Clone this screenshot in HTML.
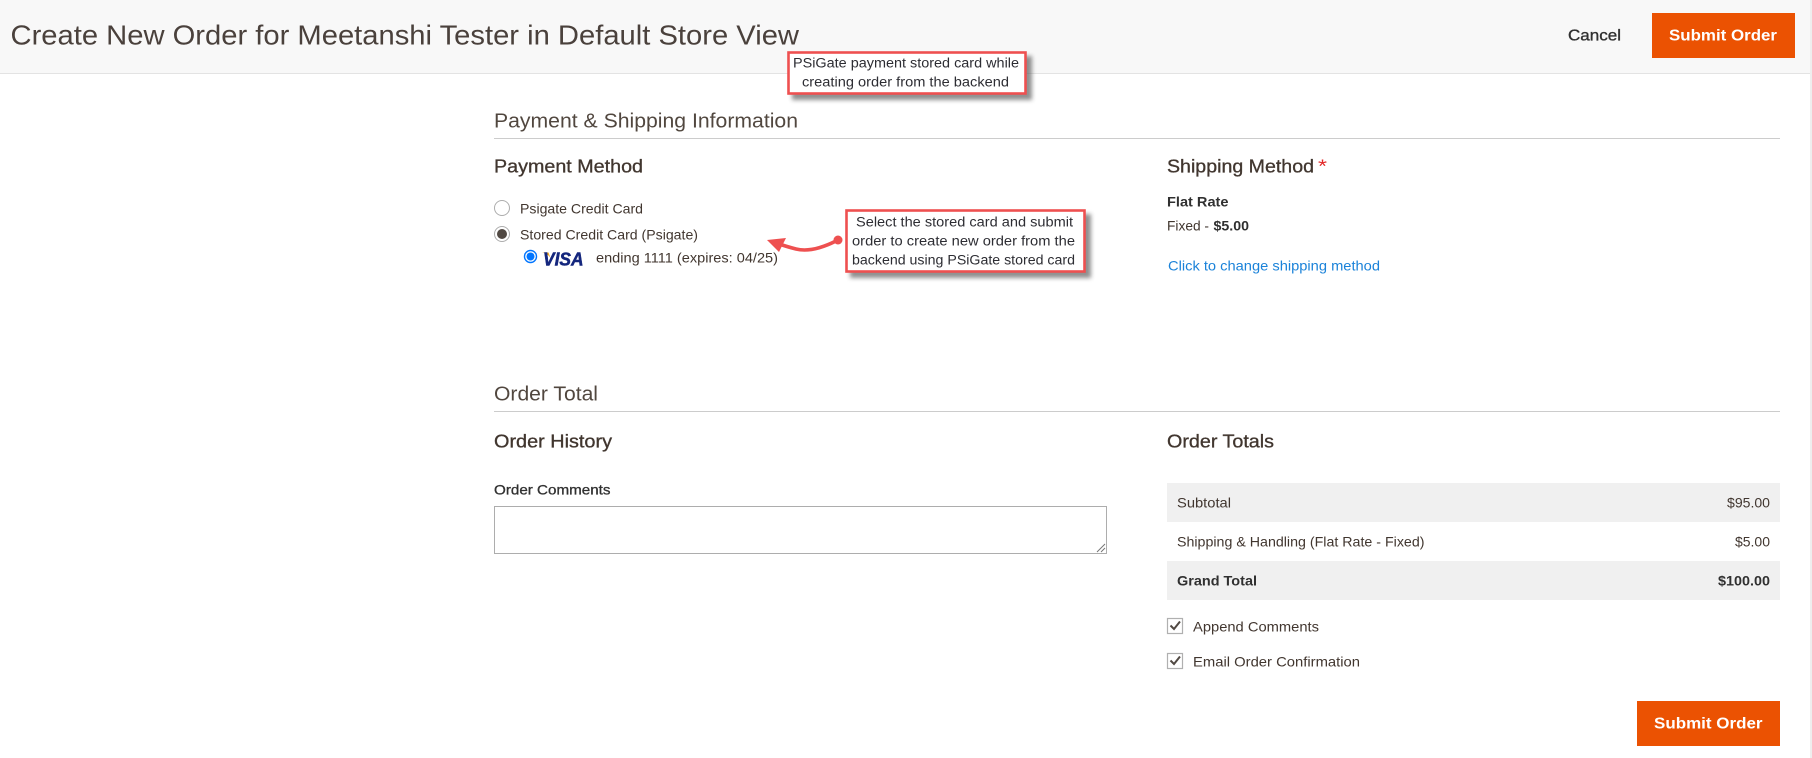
<!DOCTYPE html>
<html lang="en">
<head>
<meta charset="utf-8">
<title>Create New Order</title>
<style>
html,body{margin:0;padding:0;background:#fff;width:1812px;height:758px;overflow:hidden}
svg{display:block;position:absolute;left:0;top:0}
text{font-family:"Liberation Sans",sans-serif;fill:#41362f;white-space:pre}
.t14{font-size:14px}
.t14b{font-size:14px;font-weight:700;fill:#303030}
.h20{font-size:20px;fill:#51473f}
.h18{font-size:18px;stroke:#41362f;stroke-width:.3px}
.lbl{font-size:14px;stroke:#303030;stroke-width:.3px;fill:#303030}
.btn{font-size:16px;fill:#fff;font-weight:700}
.call{font-size:13.5px;fill:#2d2d33}
</style>
</head>
<body>
<svg width="1812" height="758" viewBox="0 0 1812 758" xmlns="http://www.w3.org/2000/svg">
<defs>
<filter id="sh" x="-10%" y="-20%" width="125%" height="150%"><feGaussianBlur stdDeviation="2"/></filter>
</defs>
<rect width="1812" height="758" fill="#fff"/>
<rect width="1812" height="73" fill="#f8f8f8"/>
<rect y="73" width="1812" height="1" fill="#e3e3e3"/>
<rect x="1810" width="2" height="758" fill="#eeeeee"/>

<text x="10.5" y="44.5" font-size="28" textLength="788.5" lengthAdjust="spacingAndGlyphs" style="fill:#4a413c">Create New Order for Meetanshi Tester in Default Store View</text>
<text x="1568" y="40.5" font-size="16" textLength="53" lengthAdjust="spacingAndGlyphs" style="stroke:#303030;stroke-width:.35px;fill:#303030">Cancel</text>
<rect x="1652" y="13" width="143" height="45" fill="#eb5202"/>
<text class="btn" x="1669" y="40.5" textLength="108" lengthAdjust="spacingAndGlyphs">Submit Order</text>

<!-- section 1 -->
<text class="h20" x="494" y="127.5" textLength="304" lengthAdjust="spacingAndGlyphs">Payment &amp; Shipping Information</text>
<rect x="494" y="138" width="1286" height="1" fill="#cccccc"/>
<text class="h18" x="494" y="172.5" textLength="149" lengthAdjust="spacingAndGlyphs">Payment Method</text>
<text class="h18" x="1167" y="172.5" textLength="147" lengthAdjust="spacingAndGlyphs">Shipping Method</text>
<text x="1318" y="172.5" font-size="18" textLength="9" lengthAdjust="spacingAndGlyphs" style="fill:#e22626">*</text>

<circle cx="502" cy="208" r="7.5" fill="#fff" stroke="#adadad" stroke-width="1"/>
<text class="t14" x="520" y="213.5" textLength="123" lengthAdjust="spacingAndGlyphs">Psigate Credit Card</text>
<circle cx="502" cy="234" r="7.5" fill="#fff" stroke="#adadad" stroke-width="1"/>
<circle cx="502" cy="234" r="5" fill="#514943"/>
<text class="t14" x="520" y="239.5" textLength="178" lengthAdjust="spacingAndGlyphs">Stored Credit Card (Psigate)</text>

<circle cx="530.5" cy="256.5" r="6" fill="#fff" stroke="#0075ff" stroke-width="1.4"/>
<circle cx="530.5" cy="256.5" r="4" fill="#0075ff"/>
<path d="M542 252.5h6.5l2 5.5c-1.5-2.700-4.500-4.700-8.500-5.500z" fill="#f2a81d"/>
<text x="543" y="265.500" font-size="18" font-weight="700" font-style="italic" textLength="40.500" lengthAdjust="spacingAndGlyphs" style="fill:#14267d;stroke:#14267d;stroke-width:.5px">VISA</text>
<text class="t14" x="596" y="262.5" textLength="182" lengthAdjust="spacingAndGlyphs">ending 1111 (expires: 04/25)</text>

<text class="t14b" x="1167" y="206.5" textLength="61.500" lengthAdjust="spacingAndGlyphs">Flat Rate</text>
<text class="t14" x="1167" y="230.5" textLength="42" lengthAdjust="spacingAndGlyphs">Fixed -</text>
<text class="t14b" x="1213.500" y="230.5" textLength="35.500" lengthAdjust="spacingAndGlyphs">$5.00</text>
<text class="t14" x="1168" y="270.5" textLength="212" lengthAdjust="spacingAndGlyphs" style="fill:#1a82d9">Click to change shipping method</text>

<!-- section 2 -->
<text class="h20" x="494" y="400.5" textLength="104" lengthAdjust="spacingAndGlyphs">Order Total</text>
<rect x="494" y="411" width="1286" height="1" fill="#cccccc"/>
<text class="h18" x="494" y="447.5" textLength="118" lengthAdjust="spacingAndGlyphs">Order History</text>
<text class="h18" x="1167" y="447.5" textLength="107" lengthAdjust="spacingAndGlyphs">Order Totals</text>
<text class="lbl" x="494" y="494.5" textLength="116.500" lengthAdjust="spacingAndGlyphs">Order Comments</text>
<rect x="494.500" y="506.500" width="612" height="47" fill="#fff" stroke="#adadad"/>
<path d="M1097 552l8-8M1101 552l4-4" stroke="#777" stroke-width="1" fill="none"/>

<rect x="1167" y="483" width="613" height="39" fill="#f0f0f0"/>
<text class="t14" x="1177" y="507.5" textLength="54" lengthAdjust="spacingAndGlyphs">Subtotal</text>
<text class="t14" x="1727" y="507.5" textLength="43" lengthAdjust="spacingAndGlyphs">$95.00</text>
<text class="t14" x="1177" y="546.5" textLength="247.500" lengthAdjust="spacingAndGlyphs">Shipping &amp; Handling (Flat Rate - Fixed)</text>
<text class="t14" x="1735" y="546.5" textLength="35" lengthAdjust="spacingAndGlyphs">$5.00</text>
<rect x="1167" y="561" width="613" height="39" fill="#f0f0f0"/>
<text class="t14b" x="1177" y="585.5" textLength="80" lengthAdjust="spacingAndGlyphs">Grand Total</text>
<text class="t14b" x="1718" y="585.5" textLength="52" lengthAdjust="spacingAndGlyphs">$100.00</text>

<rect x="1167.500" y="618.500" width="15" height="15" fill="#fff" stroke="#b0b0b0" stroke-width="1.2"/>
<path d="M1170.500 625.500l3.500 3.500 6-7.500" fill="none" stroke="#514943" stroke-width="2"/>
<text class="t14" x="1193" y="631.5" textLength="126" lengthAdjust="spacingAndGlyphs">Append Comments</text>
<rect x="1167.500" y="653.500" width="15" height="15" fill="#fff" stroke="#b0b0b0" stroke-width="1.2"/>
<path d="M1170.500 660.500l3.500 3.500 6-7.500" fill="none" stroke="#514943" stroke-width="2"/>
<text class="t14" x="1193" y="666.5" textLength="167" lengthAdjust="spacingAndGlyphs">Email Order Confirmation</text>

<rect x="1637" y="701" width="143" height="45" fill="#eb5202"/>
<text class="btn" x="1654" y="728.5" textLength="108.500" lengthAdjust="spacingAndGlyphs">Submit Order</text>

<!-- callout 1 -->
<rect x="792" y="56" width="240" height="44" fill="#555" opacity=".65" filter="url(#sh)"/>
<rect x="788.500" y="52.500" width="237" height="41" fill="#fff" stroke="#ee5050" stroke-width="2.6"/>
<text class="call" x="793" y="67.5" textLength="226" lengthAdjust="spacingAndGlyphs">PSiGate payment stored card while</text>
<text class="call" x="802" y="86.5" textLength="207" lengthAdjust="spacingAndGlyphs">creating order from the backend</text>

<!-- callout 2 -->
<rect x="850" y="214" width="241" height="64" fill="#555" opacity=".65" filter="url(#sh)"/>
<rect x="846.500" y="210.500" width="238" height="61" fill="#fff" stroke="#ee5050" stroke-width="2.6"/>
<text class="call" x="856" y="226.5" textLength="217" lengthAdjust="spacingAndGlyphs">Select the stored card and submit</text>
<text class="call" x="852" y="245.5" textLength="223" lengthAdjust="spacingAndGlyphs">order to create new order from the</text>
<text class="call" x="852" y="264.5" textLength="223" lengthAdjust="spacingAndGlyphs">backend using PSiGate stored card</text>

<!-- arrow -->
<circle cx="838" cy="240" r="4.5" fill="#ee5050"/>
<path d="M836 241C822 248 808 252 796 249C788 247 782 245 776 243" fill="none" stroke="#ee5050" stroke-width="3.6"/>
<path d="M767 240L786 238L779 252Z" fill="#ee5050"/>
</svg>
</body>
</html>
